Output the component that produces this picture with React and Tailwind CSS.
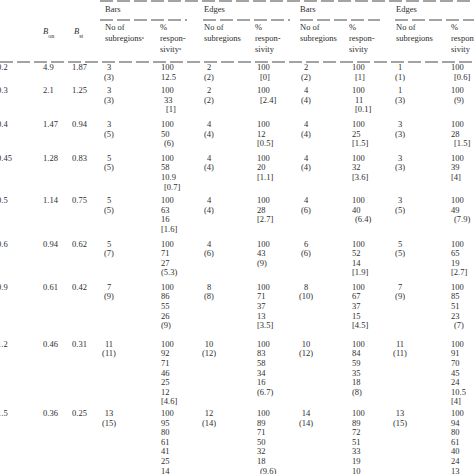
const COLS = 'grid grid-cols-[43px_29px_32px_57px_43px_53px_43px_52px_44px_55px_1fr]';

// '^' marks a value that is set in a little from the 100 above it
const ROWS = [
  { k: '0.2', on: '4.9', st: '1.87', pb: 'pb-[4px]', c: [['3', '(3)'], ['100', '12.5'], ['2', '(2)'], ['100', '^[0]'], ['2', '(2)'], ['100', '^[1]'], ['1', '(1)'], ['100', '^[0.6]']] },
  { k: '0.3', on: '2.1', st: '1.25', pb: 'pb-[5px]', c: [['3', '(3)'], ['100', '^33', '^^[1]'], ['2', '(2)'], ['100', '^[2.4]'], ['4', '(4)'], ['100', '^11', '^[0.1]'], ['1', '(3)'], ['100', '^(9)']] },
  { k: '0.4', on: '1.47', st: '0.94', pb: 'pb-[5px]', c: [['3', '(5)'], ['100', '50', '^(6)'], ['4', '(4)'], ['100', '12', '[0.5]'], ['4', '(4)'], ['100', '25', '[1.5]'], ['3', '(3)'], ['100', '28', '^[1.5]']] },
  { k: '0.45', on: '1.28', st: '0.83', pb: 'pb-[4px]', c: [['5', '(5)'], ['100', '58', '10.9', '^[0.7]'], ['4', '(4)'], ['100', '20', '[1.1]'], ['4', '(4)'], ['100', '32', '[3.6]'], ['3', '(3)'], ['100', '39', '[4]']] },
  { k: '0.5', on: '1.14', st: '0.75', pb: 'pb-[5px]', c: [['5', '(5)'], ['100', '63', '16', '[1.6]'], ['4', '(4)'], ['100', '28', '[2.7]'], ['4', '(6)'], ['100', '40', '^(6.4)'], ['3', '(5)'], ['100', '49', '^(7.9)']] },
  { k: '0.6', on: '0.94', st: '0.62', pb: 'pb-[5px]', c: [['5', '(7)'], ['100', '71', '27', '(5.3)'], ['4', '(6)'], ['100', '43', '(9)'], ['6', '(6)'], ['100', '52', '14', '[1.9]'], ['5', '(5)'], ['100', '65', '19', '[2.7]']] },
  { k: '0.9', on: '0.61', st: '0.42', pb: 'pb-[9px]', c: [['7', '(9)'], ['100', '86', '55', '26', '(9)'], ['8', '(8)'], ['100', '71', '37', '13', '[3.5]'], ['8', '(10)'], ['100', '67', '37', '15', '[4.5]'], ['7', '(9)'], ['100', '85', '51', '23', '^(7)']] },
  { k: '1.2', on: '0.46', st: '0.31', pb: 'pb-[2px]', c: [['11', '(11)'], ['100', '92', '71', '46', '25', '12', '[4.6]'], ['10', '(12)'], ['100', '83', '58', '34', '16', '(6.7)'], ['10', '(12)'], ['100', '84', '59', '35', '18', '(8)'], ['11', '(11)'], ['100', '91', '70', '45', '24', '10.5', '[4]']] },
  { k: '1.5', on: '0.36', st: '0.25', pb: 'pb-[4px]', c: [['13', '(15)'], ['100', '95', '80', '61', '41', '25', '14', '[5.2]'], ['12', '(14)'], ['100', '89', '71', '50', '32', '18', '^(9.6)'], ['14', '(14)'], ['100', '89', '72', '51', '33', '19', '10'], ['13', '(15)'], ['100', '94', '80', '61', '40', '24', '13']] },
];

const NUM_W = ['w-[10px]', 'w-[10px]', 'w-[12px]', 'w-[8px]'];

function Rule({ className = '' }) {
  return <div className={`h-[2px] bg-[repeating-linear-gradient(90deg,#a3a3a3_0_13px,transparent_13px_17px)] ${className}`} />;
}

function Pct({ items }) {
  return (
    <div className="flex flex-col">
      {items.map((t, i) => {
        if (t.startsWith('^^')) return <span key={i} className="pl-[5px]">{t.slice(2)}</span>;
        if (t.startsWith('^')) return <span key={i} className="pl-[3px]">{t.slice(1)}</span>;
        return <span key={i}>{t}</span>;
      })}
    </div>
  );
}

function Num({ items, w }) {
  return (
    <div className={`flex flex-col items-center ${w}`}>
      {items.map((t, i) => <span key={i}>{t}</span>)}
    </div>
  );
}

function B({ sub }) {
  return (
    <span className="italic">
      B<sub className="text-[6px] not-italic align-[-2px]">{sub}</sub>
    </span>
  );
}

export default function App() {
  return (
    <div className="w-[474px] h-[474px] overflow-hidden bg-white text-[#2e2e2e] font-['Liberation_Serif',serif] text-[8.5px] whitespace-nowrap">
      <Rule className="ml-[100px]" />

      {/* group labels */}
      <div className={`${COLS} pt-[2px] leading-[11px]`}>
        <div className="col-span-3" />
        <div className="col-span-2">
          <div className="pl-[1px]">Bars</div>
          <Rule className="mt-[4px] -ml-[4px] mr-[17px]" />
        </div>
        <div className="col-span-2">
          <div>Edges</div>
          <Rule className="mt-[4px] -ml-[1px] mr-[10px]" />
        </div>
        <div className="col-span-2">
          <div>Bars</div>
          <Rule className="mt-[4px] mr-[16px]" />
        </div>
        <div className="col-span-2">
          <div>Edges</div>
          <Rule className="mt-[4px] -ml-[1px]" />
        </div>
      </div>

      {/* column heads */}
      <div className={`${COLS} pt-[1px] leading-[11px]`}>
        <div />
        <div className="pt-[4px]"><B sub="on" /></div>
        <div className="pt-[4px] pl-[2px]"><B sub="st" /></div>
        <div className="pl-[1px]">No of<br />subregions<sup className="text-[5px]">a</sup></div>
        <div className="-ml-[1px]">%<br />respon-<br />sivity<sup className="text-[5px]">a</sup></div>
        <div>No of<br />subregions</div>
        <div className="-ml-[2px]">%<br />respon-<br />sivity</div>
        <div>No of<br />subregions</div>
        <div className="-ml-[3px]">%<br />respon-<br />sivity</div>
        <div>No of<br />subregions</div>
        <div>%<br />respon-<br />sivity</div>
      </div>
      <Rule className="mt-[6px]" />

      {/* body */}
      <div className="leading-[9.6px]">
        {ROWS.map(r => (
          <div key={r.k} className={`${COLS} ${r.pb}`}>
            <div className="-ml-[3px]">{r.k}</div>
            <div>{r.on}</div>
            <div>{r.st}</div>
            <Num items={r.c[0]} w={NUM_W[0]} />
            <Pct items={r.c[1]} />
            <Num items={r.c[2]} w={NUM_W[1]} />
            <Pct items={r.c[3]} />
            <Num items={r.c[4]} w={NUM_W[2]} />
            <Pct items={r.c[5]} />
            <Num items={r.c[6]} w={NUM_W[3]} />
            <Pct items={r.c[7]} />
          </div>
        ))}
      </div>
    </div>
  );
}
